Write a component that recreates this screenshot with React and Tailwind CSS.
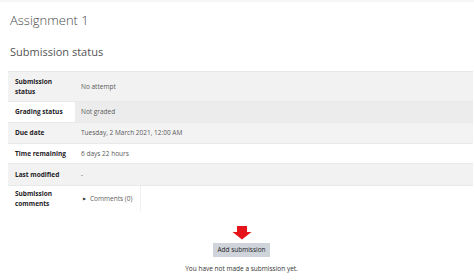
import React from 'react';

const rows = [
  { label: ['Submission', 'status'], value: 'No attempt', h: 'h-[30px]', labelBg: 'bg-[#f2f2f2]', valueBg: 'bg-[#f2f2f2]' },
  { label: ['Grading status'], value: 'Not graded', h: 'h-[21px]', labelBg: 'bg-white', valueBg: 'bg-[#ececec]' },
  { label: ['Due date'], value: 'Tuesday, 2 March 2021, 12:00 AM', h: 'h-[21px]', labelBg: 'bg-[#f3f3f3]', valueBg: 'bg-[#f3f3f3]' },
  { label: ['Time remaining'], value: '6 days 22 hours', h: 'h-[20px]', labelBg: 'bg-white', valueBg: 'bg-white' },
  { label: ['Last modified'], value: '-', h: 'h-[22px]', labelBg: 'bg-[#f2f2f2]', valueBg: 'bg-[#f2f2f2]' },
];

function DownArrow() {
  // red arrow pointing at the button
  return (
    <svg width="20" height="14" viewBox="0 0 20 14" className="block">
      <path d="M5 0 H15 V6 H19.5 L10 13.5 L0.5 6 H5 Z" fill="#e5141b" />
    </svg>
  );
}

export default function App() {
  return (
    <div className="w-[474px] h-[280px] overflow-hidden bg-white border-t-2 border-[#f6f6f6] font-['Open_Sans',sans-serif]">
      <h2 className="mt-[12px] pl-[10px] text-[13px] leading-[13px] font-light text-[#4a4a4a]">Assignment 1</h2>
      <h3 className="mt-[19px] pl-[10px] text-[11px] leading-[11px] text-[#555]">Submission status</h3>

      <div className="mt-[14px] ml-[8px] w-[465px] border-t border-[#e6e6e6]">
        {rows.map((r, i) => (
          <div key={i} className={`grid grid-cols-[67px_1fr] border-b border-[#e9e9e9] ${r.h}`}>
            <div className={`flex flex-col justify-center pl-[7px] text-[6.5px] leading-[9.5px] font-bold text-[#1d2125] ${r.labelBg}`}>
              {r.label.map((l) => (
                <span key={l}>{l}</span>
              ))}
            </div>
            <div className={`flex items-center pl-[6px] text-[6.5px] text-[#5a5a5a] ${r.valueBg}`}>{r.value}</div>
          </div>
        ))}
        <div className="grid grid-cols-[67px_1fr] h-[25px]">
          <div className="flex flex-col justify-center pl-[7px] text-[6.5px] leading-[9.5px] font-bold text-[#1d2125]">
            <span>Submission</span>
            <span>comments</span>
          </div>
          <div className="flex">
            <div className="flex items-center w-[66px] pl-[8px] gap-[4px] border-r border-[#f0f0f0] text-[6.5px] text-[#606060]">
              <span className="text-[4px] text-[#333]">▶</span>
              <span>Comments (0)</span>
            </div>
          </div>
        </div>
      </div>

      <div className="flex flex-col items-center mt-[15px] pl-[9px]">
        <DownArrow />
        <button className="mt-[3px] w-[57px] h-[14px] bg-[#ced4da] text-[6.5px] text-[#1d2125] flex items-center justify-center">
          Add submission
        </button>
        <p className="mt-[8px] text-[6.5px] leading-[8px] text-[#333]">You have not made a submission yet.</p>
      </div>
    </div>
  );
}
